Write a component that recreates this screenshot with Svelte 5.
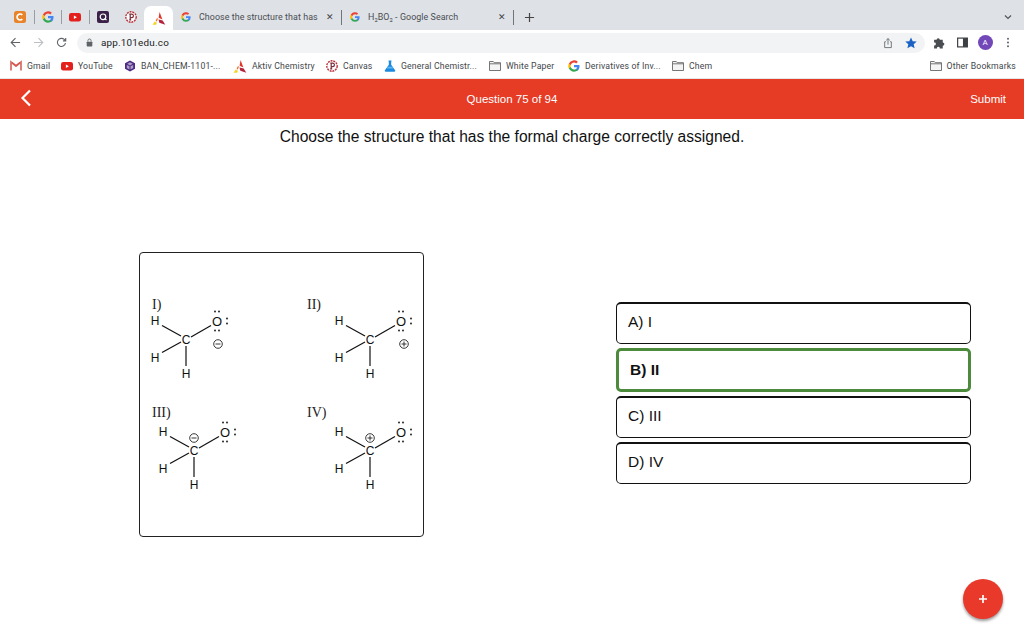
<script>
  const pinned = ['c', 'g', 'yt', 'q', 'p'];
  const bookmarks = [
    { icon: 'gmail', label: 'Gmail', w: 22, gap: 12 },
    { icon: 'yt', label: 'YouTube', w: 33, gap: 13 },
    { icon: 'ban', label: 'BAN_CHEM-1101-...', w: 80, gap: 12 },
    { icon: 'aktiv', label: 'Aktiv Chemistry', w: 63, gap: 11 },
    { icon: 'p', label: 'Canvas', w: 29, gap: 12 },
    { icon: 'flask', label: 'General Chemistr...', w: 76, gap: 12 },
    { icon: 'folder', label: 'White Paper', w: 49, gap: 13 },
    { icon: 'g', label: 'Derivatives of Inv...', w: 75, gap: 12 },
    { icon: 'folder', label: 'Chem', w: 24, gap: 0 }
  ];
  const molecules = [
    { label: 'I)', lx: 12, ly: 56, cx: 46, cy: 87, charge: '-', qx: 78, qy: 91 },
    { label: 'II)', lx: 167, ly: 56, cx: 230, cy: 87, charge: '+', qx: 264, qy: 91 },
    { label: 'III)', lx: 12, ly: 164, cx: 54, cy: 198, charge: '-', qx: 54, qy: 185 },
    { label: 'IV)', lx: 167, ly: 164, cx: 230, cy: 198, charge: '+', qx: 230, qy: 185 }
  ];
  const options = [
    { text: 'A) I' },
    { text: 'B) II', selected: true },
    { text: 'C) III' },
    { text: 'D) IV' }
  ];
</script>

{#snippet gicon()}
  <svg class="ic" viewBox="0 0 24 24">
    <path fill="#4285f4" d="M23 12.300c0-.8-.1-1.600-.2-2.300H12v4.400h6.200a5.300 5.300 0 0 1-2.300 3.500v2.900h3.700c2.200-2 3.400-5 3.400-8.500z"/>
    <path fill="#34a853" d="M12 23.500c3.100 0 5.700-1 7.600-2.800l-3.700-2.900c-1 .7-2.300 1.100-3.900 1.100-3 0-5.500-2-6.400-4.700H1.800v3A11.500 11.500 0 0 0 12 23.500z"/>
    <path fill="#fbbc05" d="M5.600 14.200a7 7 0 0 1 0-4.400v-3H1.800a11.500 11.500 0 0 0 0 10.400z"/>
    <path fill="#ea4335" d="M12 5.100c1.700 0 3.200.6 4.400 1.700l3.300-3.300A11.500 11.500 0 0 0 1.800 6.800l3.800 3C6.500 7.100 9 5.100 12 5.100z"/>
  </svg>
{/snippet}

{#snippet icon(name)}
  {#if name === 'g'}
    {@render gicon()}
  {:else if name === 'c'}
    <svg class="ic" viewBox="0 0 12 12"><rect width="12" height="12" rx="2.500" fill="#e8832a"/><path d="M8.300 4a3 3 0 1 0 0 4" fill="none" stroke="#fff" stroke-width="1.700"/></svg>
  {:else if name === 'yt'}
    <svg class="ic" viewBox="0 0 12 12"><rect y="2" width="12" height="8.500" rx="2.200" fill="#e3201b"/><path d="M4.900 4.500l3 1.700-3 1.700z" fill="#fff"/></svg>
  {:else if name === 'q'}
    <svg class="ic" viewBox="0 0 12 12"><rect width="12" height="12" rx="2" fill="#3b2147"/><circle cx="6" cy="5.800" r="2.800" fill="none" stroke="#fff" stroke-width="1.200"/><path d="M7.500 7.500l2 1.500" stroke="#fff" stroke-width="1.200"/></svg>
  {:else if name === 'p'}
    <svg class="ic" viewBox="0 0 12 12"><circle cx="6" cy="6" r="5.200" fill="#fff" stroke="#b8323a" stroke-width="1.400" stroke-dasharray="2 .8"/><path d="M4.300 3.200h2.400a1.700 1.700 0 0 1 0 3.400H5.300M5.200 3.200v5.600M4.200 8.800h2" fill="none" stroke="#7a2c3a" stroke-width="1.200"/></svg>
  {:else if name === 'gmail'}
    <svg class="ic" viewBox="0 0 12 12"><path d="M1 10.500V2l5 4 5-4v8.500" fill="none" stroke="#d8736a" stroke-width="1.800"/><path d="M2 2.500l4 3.300 4-3.300" fill="none" stroke="#d9534a" stroke-width="1.200"/></svg>
  {:else if name === 'ban'}
    <svg class="ic" viewBox="0 0 12 12"><path d="M6 .5l5 2.700v5.600l-5 2.700-5-2.700V3.200z" fill="#4d2a83"/><path d="M6 2.300l2.800 1.500L6 5.400 3.200 3.800zM5.500 6.300v3.200L2.800 8V5zM6.500 6.300v3.200L9.200 8V5z" fill="#fff" opacity=".55"/></svg>
  {:else if name === 'aktiv'}
    <svg class="ic aktiv" viewBox="0 0 14 13"><path d="M7.600 0l2.800 7.600-3.800-1.800z" fill="#e1352a"/><path d="M6.500 7.400l4.200 1.200 2.600 4.200-6-2z" fill="#b5243e"/><path d="M4.600 6.500l1.600-.3-1.400 3.300-1.200-.4z" fill="#e8762a"/><path d="M.6 12.800l2-3.400 2.200 1.300-.6 2.100z" fill="#f5d327"/></svg>
  {:else if name === 'flask'}
    <svg class="ic" viewBox="0 0 12 12"><path d="M4.500 .5h3v1H7.200v3.200l3.900 5.600c.4.700 0 1.500-.8 1.500H1.700c-.8 0-1.200-.8-.8-1.500l3.900-5.600V1.500H4.500z" fill="#1d8ae0"/><path d="M3.800 6.800h4.400l1 1.600H2.800z" fill="#5cb8f5"/></svg>
  {:else if name === 'folder'}
    <svg class="ic folder" viewBox="0 0 12 10"><path d="M.5 9.500V.5h3.800l1 1.200h6.200v7.800z" fill="#f4f4f4" stroke="#666" stroke-width=".9"/><path d="M.5 2.800h11" stroke="#777" stroke-width="1"/></svg>
  {/if}
{/snippet}

<div class="chrome">
  <div class="tabstrip">
    <div class="pins">
      {#each pinned as p, i}
        <span class="pin">{@render icon(p)}</span>
        {#if i < 3}<span class="vsep"></span>{:else if i === 3}<span class="vgap"></span>{/if}
      {/each}
      <span class="pin active">{@render icon('aktiv')}</span>
    </div>
    <div class="tab first">
      {@render gicon()}
      <span class="tabtitle">Choose the structure that has</span>
      <span class="close">✕</span>
    </div>
    <span class="tsep"></span>
    <div class="tab second">
      {@render gicon()}
      <span class="tabtitle">H₃BO₃ - Google Search</span>
      <span class="close">✕</span>
    </div>
    <span class="tsep"></span>
    <svg class="plus" viewBox="0 0 12 12"><path d="M6 1v10M1 6h10" stroke="#444" stroke-width="1.300"/></svg>
    <svg class="chev" viewBox="0 0 10 10"><path d="M2 3.500L5 6.500 8 3.500" fill="none" stroke="#555" stroke-width="1.200"/></svg>
  </div>

  <div class="toolbar">
    <svg class="nav" viewBox="0 0 12 12"><path d="M11 6H1.500M6 1.300L1.300 6 6 10.700" fill="none" stroke="#5f6368" stroke-width="1.200"/></svg>
    <svg class="nav" viewBox="0 0 12 12"><path d="M1 6h9.500M6 1.300L10.700 6 6 10.700" fill="none" stroke="#bcc0c4" stroke-width="1.200"/></svg>
    <svg class="nav" viewBox="0 0 12 12"><path d="M10.300 6.500A4.400 4.400 0 1 1 9 2.700L10.600 4.200M10.600 1.200v3H7.600" fill="none" stroke="#5f6368" stroke-width="1.200"/></svg>
    <div class="omnibox">
      <svg class="lock" viewBox="0 0 8 10"><rect x=".8" y="4" width="6.400" height="5.500" rx=".8" fill="#5f6368"/><path d="M2.200 4V2.800a1.800 1.800 0 0 1 3.600 0V4" fill="none" stroke="#5f6368"/></svg>
      <span class="url">app.101edu.co</span>
      <svg class="share" viewBox="0 0 12 12"><path d="M3.500 4.500H2v7h8v-7H8.500M6 8V.8M3.800 2.800L6 .7l2.200 2.100" fill="none" stroke="#5f6368"/></svg>
      <svg class="star" viewBox="0 0 12 12"><path d="M6 .5l1.700 3.700 4 .4-3 2.700.9 4L6 9.200l-3.600 2.100.9-4-3-2.700 4-.4z" fill="#1a63c5"/></svg>
    </div>
    <svg class="puzzle" viewBox="0 0 12 12"><path d="M1 3.500h2.300a1.500 1.500 0 1 1 3 0H9v2.400a1.500 1.500 0 1 1 0 3V11.500H6.200a1.300 1.300 0 1 0-2.500 0H1V8.600a1.300 1.300 0 1 0 0-2.500z" fill="#4a4d51"/></svg>
    <svg class="panel" viewBox="0 0 12 12"><rect x=".7" y="1.200" width="10.600" height="9.600" fill="none" stroke="#3c4043" stroke-width="1.300"/><rect x="6.500" y="1.200" width="4.800" height="9.600" fill="#3c4043"/></svg>
    <span class="avatar">A</span>
    <svg class="menu" viewBox="0 0 4 12"><circle cx="2" cy="2" r="1.100" fill="#5f6368"/><circle cx="2" cy="6" r="1.100" fill="#5f6368"/><circle cx="2" cy="10" r="1.100" fill="#5f6368"/></svg>
  </div>

  <div class="bookmarks">
    {#each bookmarks as b}
      <div class="bm" style="margin-right: {b.gap}px">
        {@render icon(b.icon)}
        <span style="width: {b.w}px">{b.label}</span>
      </div>
    {/each}
    <div class="bm other">
      {@render icon('folder')}
      <span>Other Bookmarks</span>
    </div>
  </div>
</div>

<header class="appbar">
  <svg class="back" viewBox="0 0 12 18"><path d="M10 1.500L2.500 9l7.500 7.500" fill="none" stroke="#fff" stroke-width="2.200"/></svg>
  <span class="qnum">Question 75 of 94</span>
  <span class="submit">Submit</span>
</header>

<main>
  <h1>Choose the structure that has the formal charge correctly assigned.</h1>
  <div class="content">
    <div class="card">
      <svg viewBox="0 0 283 283" width="283" height="283">
        {#each molecules as m}
          {@const ox = m.cx + 31}
          {@const oy = m.cy - 19}
          <text class="lbl" x={m.lx} y={m.ly}>{m.label}</text>
          <g stroke="#111" stroke-width="1.200">
            <line x1={m.cx - 24} y1={m.cy - 14.500} x2={m.cx - 5} y2={m.cy - 4} />
            <line x1={m.cx - 24} y1={m.cy + 12.500} x2={m.cx - 5} y2={m.cy + 2} />
            <line x1={m.cx} y1={m.cy + 6} x2={m.cx} y2={m.cy + 26} />
            <line x1={m.cx + 5} y1={m.cy - 3} x2={m.cx + 25} y2={m.cy - 14.500} />
          </g>
          <g class="atoms">
            <text x={m.cx} y={m.cy + 4} text-anchor="middle">C</text>
            <text x={m.cx - 31} y={m.cy - 14.700} text-anchor="middle">H</text>
            <text x={m.cx - 31} y={m.cy + 21.500} text-anchor="middle">H</text>
            <text x={m.cx} y={m.cy + 38} text-anchor="middle">H</text>
            <text x={ox} y={oy + 4.500} text-anchor="middle" class="oxy">O</text>
          </g>
          <g fill="#111">
            <circle cx={ox - 2} cy={oy - 9.500} r=".9" />
            <circle cx={ox + 2} cy={oy - 9.500} r=".9" />
            <circle cx={ox - 2} cy={oy + 9.500} r=".9" />
            <circle cx={ox + 2} cy={oy + 9.500} r=".9" />
            <circle cx={ox + 10} cy={oy - 2.500} r=".9" />
            <circle cx={ox + 10} cy={oy + 2.500} r=".9" />
          </g>
          <g fill="none" stroke="#222" stroke-width=".9">
            <circle cx={m.qx} cy={m.qy} r="4.300" />
            <line x1={m.qx - 2.500} y1={m.qy} x2={m.qx + 2.500} y2={m.qy} />
            {#if m.charge === '+'}
              <line x1={m.qx} y1={m.qy - 2.500} x2={m.qx} y2={m.qy + 2.500} />
            {/if}
          </g>
        {/each}
      </svg>
    </div>
    <div class="options">
      {#each options as o}
        <div class="option" class:selected={o.selected}>{o.text}</div>
      {/each}
    </div>
  </div>
</main>

<button class="fab" aria-label="Add">
  <svg viewBox="0 0 10 10"><path d="M5 1v8M1 5h8" stroke="#fff" stroke-width="1.700"/></svg>
</button>

<style>
  :global(body) {
    margin: 0;
    background: #fff;
    overflow: hidden;
    font-family: "Liberation Sans", Arial, sans-serif;
  }
  .ic { width: 12px; height: 12px; flex: none; display: block; }
  .ic.aktiv { width: 14px; height: 13px; }
  .ic.folder { width: 12px; height: 10px; }

  .chrome { font-family: Roboto, "Liberation Sans", sans-serif; color: #3c4043; }
  .tabstrip {
    height: 30px;
    background: #dee1e6;
    display: flex;
    align-items: center;
    padding: 4px 0 0 14px;
    box-sizing: border-box;
  }
  .pins { display: flex; align-items: center; height: 100%; }
  .pin { width: 12px; display: flex; justify-content: center; }
  .vsep { width: 1px; height: 14px; background: #9a9da1; margin: 0 7px 0 7.500px; }
  .vgap { width: 16px; }
  .pin.active {
    width: 29px;
    height: 24px;
    margin: 2px 0 0 7.500px;
    background: #fff;
    border-radius: 7px 7px 0 0;
    align-items: center;
  }
  .tab {
    display: flex;
    align-items: center;
    font-size: 8.900px;
    letter-spacing: .07px;
    color: #4a4d51;
    white-space: nowrap;
  }
  .tab .ic { width: 10px; height: 10px; }
  .tab.first { width: 160px; margin-left: 8px; }
  .tab.second { width: 163px; margin-left: 8px; }
  .tabtitle { margin-left: 8px; flex: 1; overflow: hidden; }
  .tab.first .tabtitle { margin-right: 8px; }
  .close { font-size: 8.500px; color: #444; margin-right: 7px; }
  .tsep { width: 1px; height: 15px; background: #70757a; }
  .plus { width: 11px; height: 11px; margin-left: 10px; }
  .chev { width: 10px; height: 10px; margin-left: auto; margin-right: 11px; }

  .toolbar {
    height: 23px;
    background: #fff;
    display: flex;
    align-items: center;
    padding: 2px 0 0 10px;
    box-sizing: border-box;
  }
  .nav { width: 11px; height: 11px; margin-right: 12px; }
  .omnibox {
    width: 848px;
    height: 20px;
    box-sizing: border-box;
    margin-left: -2px;
    background: #f1f3f4;
    border-radius: 10px;
    display: flex;
    align-items: center;
    padding-left: 8.500px;
  }
  .lock { width: 7px; height: 9px; }
  .url { font-size: 9.900px; color: #202124; margin-left: 8.500px; letter-spacing: .2px; }
  .share { width: 10px; height: 12px; margin-left: auto; }
  .star { width: 12px; height: 12px; margin: 0 8px 0 12px; }
  .puzzle { width: 13px; height: 13px; margin-left: 7.500px; }
  .panel { width: 11px; height: 11px; margin-left: 11px; }
  .avatar {
    width: 15px;
    height: 15px;
    border-radius: 50%;
    background: #7248b9;
    color: #fff;
    font-size: 8px;
    display: flex;
    align-items: center;
    justify-content: center;
    margin-left: 10px;
  }
  .menu { width: 4px; height: 11px; margin-left: 13.500px; }

  .bookmarks {
    height: 26px;
    background: #fff;
    display: flex;
    align-items: center;
    padding: 1px 0 0 10px;
    box-sizing: border-box;
    border-bottom: 1px solid #e4e6e8;
  }
  .bm {
    display: flex;
    align-items: center;
    gap: 5px;
    font-size: 8.700px;
    letter-spacing: .15px;
    color: #44474b;
    white-space: nowrap;
  }
  .bm span { display: block; }
  .bm.other { margin-left: auto; margin-right: 8px; }

  .appbar {
    height: 40px;
    background: #e63b25;
    color: #fff;
    display: flex;
    align-items: center;
    justify-content: center;
    position: relative;
    font-size: 11.500px;
  }
  .back { position: absolute; left: 20px; top: 10px; width: 12px; height: 18px; }
  .submit { position: absolute; right: 18px; top: 14px; }

  main { display: block; }
  h1 {
    margin: 0;
    height: 34px;
    line-height: 36px;
    text-align: center;
    font-size: 15.600px;
    font-weight: 400;
    color: #111;
  }
  .content {
    display: flex;
    align-items: flex-start;
    padding: 99px 0 0 139px;
  }
  .card {
    width: 285px;
    height: 285px;
    box-sizing: border-box;
    border: 1px solid #222;
    border-radius: 4px;
  }
  .card svg { display: block; }
  .lbl { font-family: "Liberation Serif", serif; font-size: 14px; fill: #222; }
  .atoms text { font-family: "Liberation Sans", sans-serif; font-size: 12px; fill: #111; }
  .atoms .oxy { font-size: 13px; }
  .options {
    width: 355px;
    margin: 50px 0 0 192px;
    display: flex;
    flex-direction: column;
    gap: 4px;
  }
  .option {
    height: 42px;
    box-sizing: border-box;
    border: 1px solid #111;
    border-top-width: 2px;
    border-radius: 5px;
    padding: 0 0 3px 11px;
    display: flex;
    align-items: center;
    font-size: 15.500px;
    color: #111;
  }
  .option.selected {
    height: 44px;
    border: 3px solid #4b8b3b;
    padding: 0 0 0 11px;
    font-weight: 700;
  }
  .fab {
    position: fixed;
    left: 963px;
    top: 579px;
    width: 40px;
    height: 40px;
    padding: 0;
    border: 0;
    border-radius: 50%;
    background: #e8392a;
    box-shadow: 0 2px 3px rgba(0, 0, 0, .4);
    display: flex;
    align-items: center;
    justify-content: center;
  }
  .fab svg { width: 10px; height: 10px; }
</style>
